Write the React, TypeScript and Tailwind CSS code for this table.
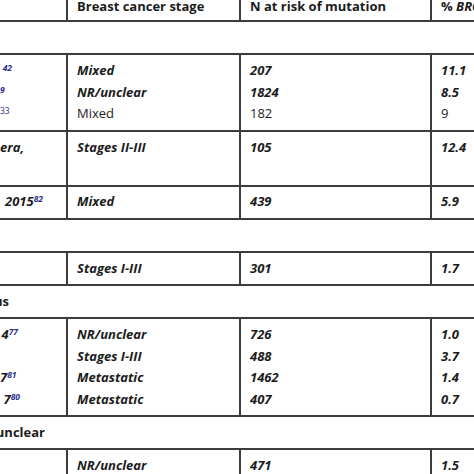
// Cropped view of a study table: breast cancer stage, N at risk, % BRCA mutation
const LINE = 'border-[#3c3c3c]'

type Frag = { text?: string; sup?: string; pr: string; plain?: boolean }
type Row = {
  kind: 'data'
  left: (Frag | null)[]
  stage: { text: string; plain?: boolean }[]
  n: { text: string; plain?: boolean }[]
  pct: { text: string; plain?: boolean }[]
}
type Heading = { kind: 'heading'; text?: string; w?: string }

const ROWS: (Row | Heading)[] = [
  { kind: 'heading' },
  {
    kind: 'data',
    left: [
      { sup: '42', pr: 'pr-[54px]' },
      { sup: '9', pr: 'pr-[62px]' },
      { sup: '33', pr: 'pr-[57px]', plain: true },
    ],
    stage: [{ text: 'Mixed' }, { text: 'NR/unclear' }, { text: 'Mixed', plain: true }],
    n: [{ text: '207' }, { text: '1824' }, { text: '182', plain: true }],
    pct: [{ text: '11.1' }, { text: '8.5' }, { text: '9', plain: true }],
  },
  {
    kind: 'data',
    left: [{ text: 'era,', pr: 'pr-[46px]' }, null],
    stage: [{ text: 'Stages II-III' }],
    n: [{ text: '105' }],
    pct: [{ text: '12.4' }],
  },
  {
    kind: 'data',
    left: [{ text: '2015', sup: '82', pr: 'pr-[23px]' }],
    stage: [{ text: 'Mixed' }],
    n: [{ text: '439' }],
    pct: [{ text: '5.9' }],
  },
  { kind: 'heading' },
  {
    kind: 'data',
    left: [null],
    stage: [{ text: 'Stages I-III' }],
    n: [{ text: '301' }],
    pct: [{ text: '1.7' }],
  },
  { kind: 'heading', text: 'us', w: 'w-[9px]' },
  {
    kind: 'data',
    left: [
      { text: '4', sup: '77', pr: 'pr-[48px]' },
      null,
      { text: '7', sup: '81', pr: 'pr-[50px]' },
      { text: '7', sup: '80', pr: 'pr-[46px]' },
    ],
    stage: [{ text: 'NR/unclear' }, { text: 'Stages I-III' }, { text: 'Metastatic' }, { text: 'Metastatic' }],
    n: [{ text: '726' }, { text: '488' }, { text: '1462' }, { text: '407' }],
    pct: [{ text: '1.0' }, { text: '3.7' }, { text: '1.4' }, { text: '0.7' }],
  },
  { kind: 'heading', text: 'unclear', w: 'w-[45px]' },
  {
    kind: 'data',
    left: [null],
    stage: [{ text: 'NR/unclear' }],
    n: [{ text: '471' }],
    pct: [{ text: '1.5' }],
  },
]

function Lines({ items }: { items: { text: string; plain?: boolean }[] }) {
  return (
    <>
      {items.map((it, i) => (
        <div key={i} className={it.plain ? 'font-normal' : 'font-bold italic'}>
          {it.text}
        </div>
      ))}
    </>
  )
}

export default function App() {
  return (
    <div
      className="h-[474px] w-[474px] overflow-hidden bg-white text-[13px] leading-[21.6px] text-[#1c1c1c]"
      style={{ fontFamily: '"Open Sans", Lato, sans-serif' }}
    >
      {/* header */}
      <div className={`-mt-[9px] grid grid-cols-[68px_173px_191px_1fr] border-b-2 ${LINE} font-bold`}>
        <div className={`border-r-2 ${LINE} pt-[4.8px] pb-[2.8px]`}>&nbsp;</div>
        <div className={`border-r-2 ${LINE} pt-[4.8px] pb-[2.8px] pl-[9px] whitespace-nowrap`}>Breast cancer stage</div>
        <div className={`border-r-2 ${LINE} pt-[4.8px] pb-[2.8px] pl-[9px] whitespace-nowrap`}>N at risk of mutation</div>
        <div className="whitespace-nowrap pt-[4.8px] pb-[2.8px] pl-[9px]">
          % <span className="italic">BRCA</span> mutation
        </div>
      </div>

      {ROWS.map((r, i) =>
        r.kind === 'heading' ? (
          <div key={i} className={`border-b-2 ${LINE} py-[4.8px] font-bold`}>
            {r.text ? (
              <div className={`flex ${r.w} justify-end whitespace-nowrap`}>
                <span>{r.text}</span>
              </div>
            ) : (
              <>&nbsp;</>
            )}
          </div>
        ) : (
          <div key={i} className={`grid grid-cols-[68px_173px_191px_1fr] border-b-2 ${LINE}`}>
            <div className={`border-r-2 ${LINE} py-[4.8px]`}>
              {r.left.map((f, j) =>
                f ? (
                  <div
                    key={j}
                    className={`${f.pr} whitespace-nowrap text-right ${f.plain ? 'font-normal' : 'font-bold italic'}`}
                  >
                    {f.text}
                    {f.sup && <sup className="text-[8.5px] text-[#2b2d8c]">{f.sup}</sup>}
                  </div>
                ) : (
                  <div key={j}>&nbsp;</div>
                ),
              )}
            </div>
            <div className={`border-r-2 ${LINE} py-[4.8px] pl-[9px]`}>
              <Lines items={r.stage} />
            </div>
            <div className={`border-r-2 ${LINE} py-[4.8px] pl-[9px]`}>
              <Lines items={r.n} />
            </div>
            <div className="py-[4.8px] pl-[9px]">
              <Lines items={r.pct} />
            </div>
          </div>
        ),
      )}
    </div>
  )
}
